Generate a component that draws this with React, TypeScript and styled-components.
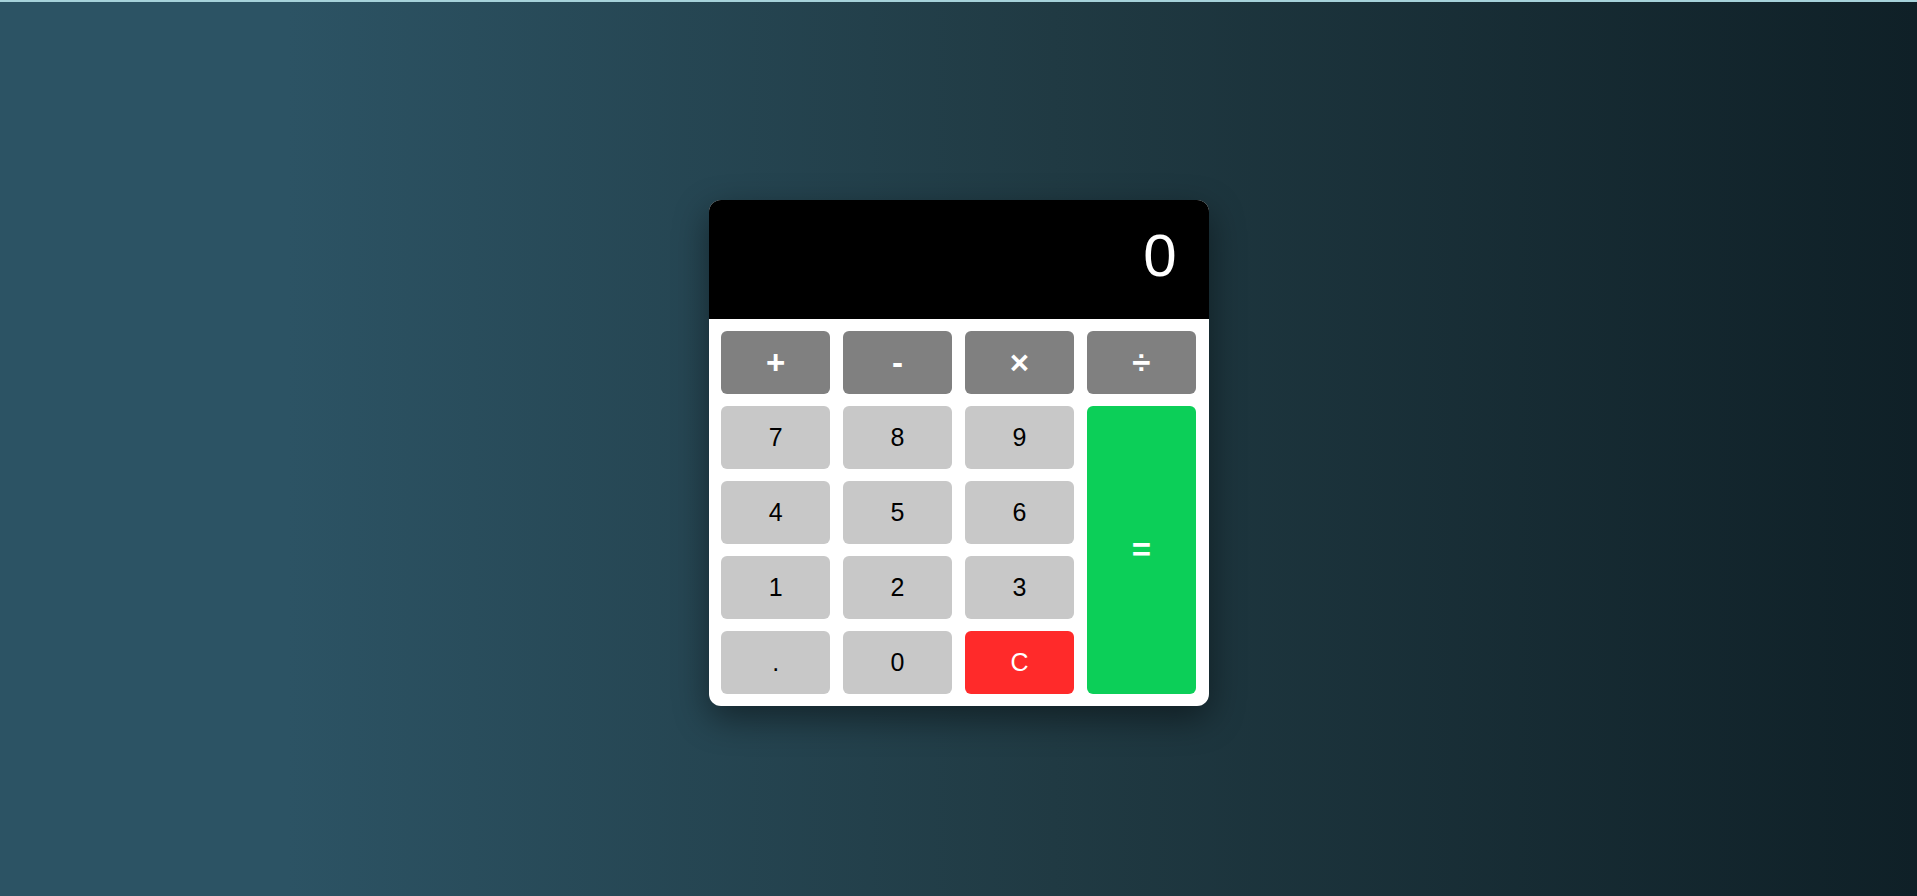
import React, { useState } from 'react'
import styled, { createGlobalStyle } from 'styled-components'

const GlobalStyle = createGlobalStyle`
  * { box-sizing: border-box; }
  html, body { margin: 0; padding: 0; }
  body {
    font-family: "Liberation Sans", Arial, sans-serif;
    border-top: 2px solid #a6d2da;
  }
`

type Kind = 'op' | 'num' | 'clear' | 'equal'

const App = () => {
  const [value, setValue] = useState<string>('0')

  const press = (key: string) => {
    if (key === 'C') return setValue('0')
    if (key === '=') return
    setValue(v => (v === '0' ? key : v + key))
  }

  const ops = ['+', '-', '×', '÷']
  const rows = [
    ['7', '8', '9'],
    ['4', '5', '6'],
    ['1', '2', '3'],
  ]

  return (
    <>
      <GlobalStyle />
      <Page>
        <Calculator>
          <Display>{value}</Display>
          <Keys>
            {ops.map(o => (
              <Key key={o} kind="op" onClick={() => press(o)}>{o}</Key>
            ))}
            {rows.flat().map(n => (
              <Key key={n} kind="num" onClick={() => press(n)}>{n}</Key>
            ))}
            <Key kind="num" onClick={() => press('.')}>.</Key>
            <Key kind="num" onClick={() => press('0')}>0</Key>
            <Key kind="clear" onClick={() => press('C')}>C</Key>
            <Equal kind="equal" onClick={() => press('=')}>=</Equal>
          </Keys>
        </Calculator>
      </Page>
    </>
  )
}

export default App

const Page = styled.div`
  width: 100%;
  height: 894px;
  display: flex;
  align-items: center;
  justify-content: center;
  padding-top: 8px;
  background: linear-gradient(to right, #2c5364 15%, #203a43 55%, #0f2027);
`

const Calculator = styled.div`
  width: 500px;
  background: #ffffff;
  border-radius: 12px;
  overflow: hidden;
  box-shadow: 0 12px 35px rgba(0, 0, 0, 0.45);
`

const Display = styled.div`
  height: 119px;
  background: #000000;
  color: #ffffff;
  font-size: 60px;
  display: flex;
  align-items: center;
  justify-content: flex-end;
  padding: 0 32px 8px 0;
`

const Keys = styled.div`
  display: grid;
  grid-template-columns: repeat(4, 1fr);
  grid-auto-rows: 62.5px;
  gap: 12.5px;
  padding: 12.5px;
`

const colors: Record<Kind, { bg: string; fg: string; weight: number; size: number }> = {
  op: { bg: '#808080', fg: '#ffffff', weight: 700, size: 33 },
  num: { bg: '#c8c8c8', fg: '#000000', weight: 400, size: 25 },
  clear: { bg: '#ff2a2a', fg: '#ffffff', weight: 400, size: 25 },
  equal: { bg: '#0ccf58', fg: '#ffffff', weight: 700, size: 33 },
}

const Key = styled.button<{ kind: Kind }>`
  border: none;
  border-radius: 6px;
  font-family: "Liberation Sans", Arial, sans-serif;
  cursor: pointer;
  font-size: ${({ kind }) => colors[kind].size}px;
  background: ${({ kind }) => colors[kind].bg};
  color: ${({ kind }) => colors[kind].fg};
  font-weight: ${({ kind }) => colors[kind].weight};
  display: flex;
  align-items: center;
  justify-content: center;
  padding: 0;
`

const Equal = styled(Key)`
  grid-column: 4;
  grid-row: 2 / span 4;
`
